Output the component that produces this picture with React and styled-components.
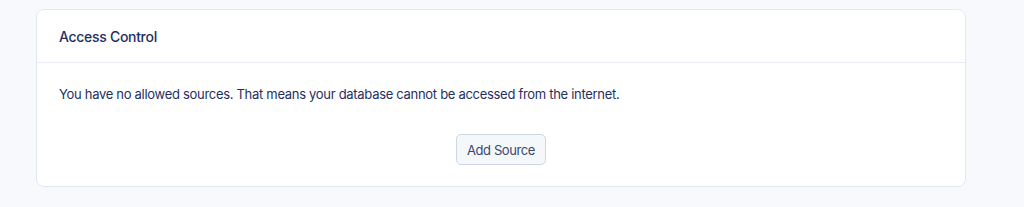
import React from 'react'
import styled, { createGlobalStyle } from 'styled-components';

const GlobalStyle = createGlobalStyle`
    html, body {
        margin: 0;
        padding: 0;
        background: #f8f9fc;
        font-family: Inter, "Noto Sans", sans-serif;
    }
`;

function App() {
  return (
    <PageStyled>
        <GlobalStyle/>
        <div className='card'>
            <div className='card-header'>
                <h2>Access Control</h2>
            </div>
            <div className='card-body'>
                <p>You have no allowed sources. That means your database cannot be accessed from the internet.</p>
                <div className='actions'>
                    <AddButton>Add Source</AddButton>
                </div>
            </div>
        </div>
    </PageStyled>
  )
}

const PageStyled = styled.div`
    padding: 9px 58px 20px 36px;
    .card{
        background: #ffffff;
        border: 1px solid #e3e7f1;
        border-radius: 8px;
    }
    .card-header{
        height: 52px;
        display: flex;
        align-items: center;
        padding: 0 22px;
        border-bottom: 1px solid #e9ecf4;
        h2{
            margin: 0;
            font-size: 14px;
            font-weight: 500;
            letter-spacing: -0.3px;
            color: #1f2f62;
        }
    }
    .card-body{
        padding: 21px 22px 21px;
        p{
            margin: 0;
            font-size: 13px;
            line-height: 20px;
            letter-spacing: -0.3px;
            color: #1f2f62;
        }
        .actions{
            display: flex;
            justify-content: center;
            margin-top: 30px;
        }
    }
`;

const AddButton = styled.button`
    height: 31px;
    padding: 0 10px;
    background: #f5f8fb;
    border: 1px solid #cdd6e4;
    border-radius: 5px;
    font-family: Inter, sans-serif;
    font-size: 13px;
    letter-spacing: -0.4px;
    color: #3a4670;
    cursor: pointer;
`;

export default App
